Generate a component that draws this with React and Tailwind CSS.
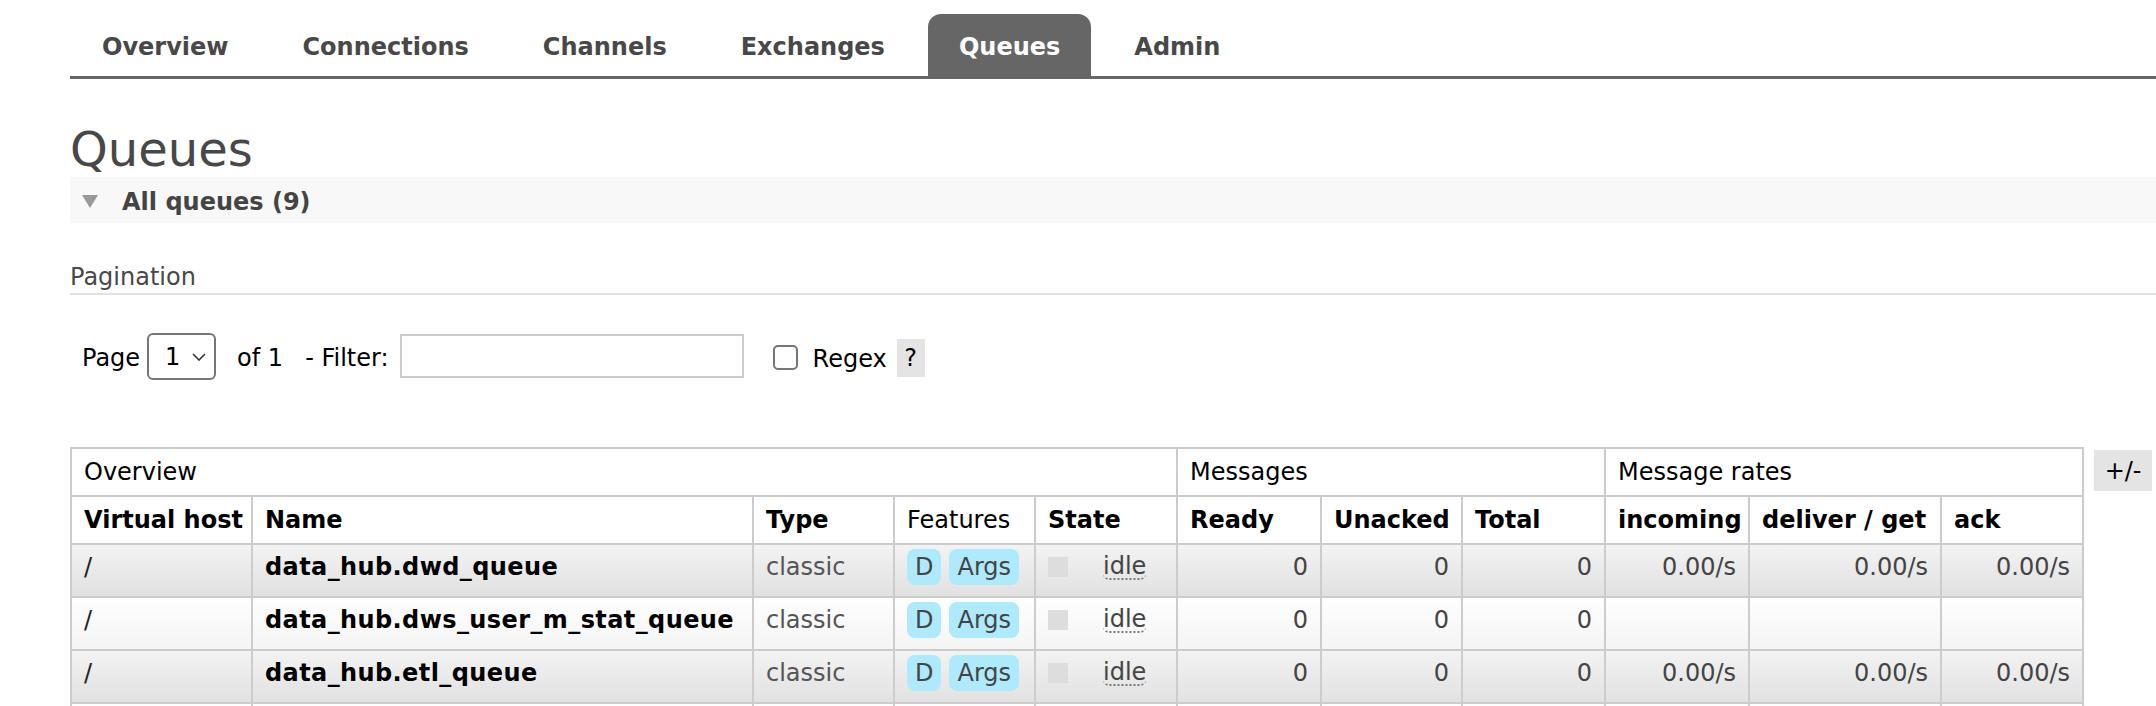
import React from 'react';

const tabs = ['Overview', 'Connections', 'Channels', 'Exchanges', 'Queues', 'Admin'];

const queues = [
    { vhost: '/', name: 'data_hub.dwd_queue', rates: true },
    { vhost: '/', name: 'data_hub.dws_user_m_stat_queue', rates: false },
    { vhost: '/', name: 'data_hub.etl_queue', rates: true },
    { vhost: '/', name: 'data_hub.ods_queue', rates: true },
];

const cols = ['w-[181px]', 'w-[501px]', 'w-[141px]', 'w-[141px]', 'w-[142px]', 'w-[144px]', 'w-[141px]', 'w-[143px]', 'w-[144px]', 'w-[192px]', 'w-[142px]'];

const th = 'border-2 border-[#ccc] px-[12px] h-[48px] text-left text-black whitespace-nowrap';

const Badge = ({ children }) => (
    <span className="h-[36px] px-[8px] rounded-[8px] bg-[#aeeafc] text-[#444] flex items-center">{children}</span>
);

const Cell = ({ children, right, className = '' }) => (
    <td className={`border-2 border-[#ccc] px-[12px] pt-[4px] pb-[11px] align-top whitespace-nowrap ${className}`}>
        <div className={`h-[36px] flex items-center gap-[8px] ${right ? 'justify-end' : ''}`}>{children}</div>
    </td>
);

export default function App() {
    return (
        <div className="min-h-screen bg-white font-['DejaVu_Sans',Verdana,sans-serif] text-[24px] leading-[28px] text-[#444]">
            <div className="pl-[70px]">
                {/* Menu tabs */}
                <ul className="flex gap-[12px] pt-[14px] pl-[1px] border-b-[3px] border-[#666]">
                    {tabs.map((t) => (
                        <li
                            key={t}
                            className={
                                t === 'Queues'
                                    ? 'px-[31px] pt-[19px] pb-[15px] rounded-t-[13px] bg-[#666] text-white font-bold'
                                    : 'px-[31px] pt-[19px] pb-[15px] text-[#484848] font-bold'
                            }
                        >
                            {t}
                        </li>
                    ))}
                </ul>

                <h1 className="mt-[42px] text-[48px] leading-[56px] text-[#484848]">Queues</h1>

                {/* Section header */}
                <div className="h-[46px] bg-[#f8f8f8] flex items-center pl-[12px] pt-[3px]">
                    <svg width="16" height="13" viewBox="0 0 16 13" className="mr-[24px]">
                        <polygon points="0,0 16,0 8,13" fill="#999" />
                    </svg>
                    <span className="font-bold text-[#444]">All queues (9)</span>
                </div>

                {/* Pagination */}
                <h3 className="mt-[40px] pb-[2px] border-b-2 border-[#e2e2e2] text-[#484848]">Pagination</h3>
                <div className="mt-[38px] h-[46px] flex items-center pl-[12px] text-black">
                    <span className="mt-[3px]">Page</span>
                    <div className="ml-[7px] w-[69px] h-[47px] border-2 border-[#767676] rounded-[6px] flex items-center pl-[16px] pt-[2px]">
                        <span>1</span>
                        <svg width="14" height="8" viewBox="0 0 14 8" className="ml-[12px]">
                            <polyline points="1,1 7,7 13,1" fill="none" stroke="#333" strokeWidth="1.6" />
                        </svg>
                    </div>
                    <span className="ml-[21px] mt-[3px]">of 1</span>
                    <span className="ml-[22px] mt-[3px]">- Filter:</span>
                    <div className="ml-[11px] w-[344px] h-[44px] border-2 border-[#ccc]" />
                    <div className="ml-[29px] mt-[3px] w-[25px] h-[25px] border-2 border-[#767676] rounded-[5px]" />
                    <span className="ml-[15px] mt-[5px]">Regex</span>
                    <span className="ml-[10px] mt-[3px] w-[28px] h-[38px] bg-[#e4e4e4] flex items-center justify-center">?</span>
                </div>

                {/* Queue table */}
                <div className="mt-[68px] flex items-start">
                    <table className="table-fixed border-collapse w-[2012px]">
                        <colgroup>
                            {cols.map((c, i) => (
                                <col key={i} className={c} />
                            ))}
                        </colgroup>
                        <thead>
                            <tr className="bg-white">
                                <th colSpan={5} className={`${th} font-normal`}>Overview</th>
                                <th colSpan={3} className={`${th} font-normal`}>Messages</th>
                                <th colSpan={3} className={`${th} font-normal`}>Message rates</th>
                            </tr>
                            <tr className="bg-white">
                                <th className={`${th} font-bold`}>Virtual host</th>
                                <th className={`${th} font-bold`}>Name</th>
                                <th className={`${th} font-bold`}>Type</th>
                                <th className={`${th} font-normal`}>Features</th>
                                <th className={`${th} font-bold`}>State</th>
                                <th className={`${th} font-bold`}>Ready</th>
                                <th className={`${th} font-bold`}>Unacked</th>
                                <th className={`${th} font-bold`}>Total</th>
                                <th className={`${th} font-bold`}>incoming</th>
                                <th className={`${th} font-bold`}>deliver / get</th>
                                <th className={`${th} font-bold`}>ack</th>
                            </tr>
                        </thead>
                        <tbody>
                            {queues.map((q, i) => (
                                <tr
                                    key={q.name}
                                    className={
                                        i % 2 === 0
                                            ? 'bg-gradient-to-b from-[#f3f3f3] to-[#e1e1e1]'
                                            : 'bg-gradient-to-b from-[#fefefe] to-[#f4f4f4]'
                                    }
                                >
                                    <Cell className="text-[#222]">{q.vhost}</Cell>
                                    <Cell className="font-bold text-black tracking-[0.4px]">{q.name}</Cell>
                                    <Cell className="text-[#555]">classic</Cell>
                                    <Cell>
                                        <Badge>D</Badge>
                                        <Badge>Args</Badge>
                                    </Cell>
                                    <Cell>
                                        <span className="w-[20px] h-[20px] bg-[#dddddd]" />
                                        <span className="ml-[27px] leading-[24px] border-b-2 border-dotted border-[#777] rounded-b-[6px]">idle</span>
                                    </Cell>
                                    <Cell right>0</Cell>
                                    <Cell right>0</Cell>
                                    <Cell right>0</Cell>
                                    <Cell right>{q.rates ? '0.00/s' : ''}</Cell>
                                    <Cell right>{q.rates ? '0.00/s' : ''}</Cell>
                                    <Cell right>{q.rates ? '0.00/s' : ''}</Cell>
                                </tr>
                            ))}
                        </tbody>
                    </table>
                    <span className="ml-[10px] mt-[3px] w-[58px] h-[41px] bg-[#e4e4e4] text-black flex items-center justify-center">+/-</span>
                </div>
            </div>
        </div>
    );
}
